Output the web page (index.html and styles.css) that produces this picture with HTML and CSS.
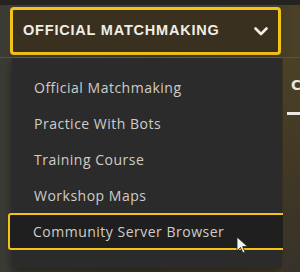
FILE: index.html
```html
<!DOCTYPE html>
<html>
<head>
<meta charset="utf-8">
<link rel="stylesheet" href="styles.css">
</head>
<body>
<div class="scene">
  <div class="side-right">
    <span class="side-letter">C</span>
    <span class="side-bar"></span>
  </div>
  <div class="dropdown">
    <button class="select">
      <span class="select-label">OFFICIAL MATCHMAKING</span>
      <svg class="chevron" width="14" height="9" viewBox="0 0 14 9"><polyline points="1.5,1.5 7,7 12.5,1.5" fill="none" stroke="#f2efe6" stroke-width="2.6" stroke-linecap="round" stroke-linejoin="round"/></svg>
    </button>
    <ul class="menu">
      <li class="item">Official Matchmaking</li>
      <li class="item">Practice With Bots</li>
      <li class="item">Training Course</li>
      <li class="item">Workshop Maps</li>
      <li class="item active">Community Server Browser</li>
    </ul>
  </div>
  <svg class="cursor" width="14" height="20" viewBox="0 0 14 20"><path d="M1 1 L1 15 L4.5 11.5 L7 17 L9 16 L6.6 10.6 L11.5 10.6 Z" fill="#f4f4f4" stroke="#222" stroke-width="0.8"/></svg>
</div>
</body>
</html>
```

FILE: styles.css
```css
* { box-sizing: border-box; }
html, body { margin: 0; padding: 0; }
body {
  width: 300px;
  height: 272px;
  overflow: hidden;
  background:
    linear-gradient(180deg, #24231f 0px, #24231f 5px, transparent 5px),
    linear-gradient(180deg, transparent 57px, #55534d 57px, #55534d 58px, transparent 58px),
    linear-gradient(90deg, #3b3b36 0px, #3d3b33 12px, #3f3a2a 150px, #473e26 283px, #4c4128 300px);
  font-family: "Open Sans", "DejaVu Sans", sans-serif;
}
.scene {
  position: relative;
  width: 300px;
  height: 272px;
  padding: 7px 0 0 10px;
}
.side-right {
  position: absolute;
  left: 283px;
  top: 58px;
  width: 17px;
  height: 214px;
  background: linear-gradient(180deg, #4b4127 0%, #3f3725 60%, #37322a 100%);
}
.side-letter {
  position: absolute;
  left: 8px;
  top: 19px;
  color: #e8e6df;
  font: 700 14px "DejaVu Sans", sans-serif;
}
.side-bar {
  position: absolute;
  left: 4px;
  top: 54px;
  width: 13px;
  height: 3px;
  background: #e9e7e0;
}
.dropdown {
  width: 272px;
  display: flex;
  flex-direction: column;
}
.select {
  width: 271px;
  height: 48px;
  border: 3px solid #f3c21b;
  border-radius: 4px;
  background: #3a3020;
  display: flex;
  align-items: center;
  justify-content: space-between;
  padding: 0 10px 2px 10px;
  font: inherit;
  cursor: pointer;
}
.select-label {
  color: #efede6;
  font: 700 14.5px "Liberation Sans", Arial, sans-serif;
  letter-spacing: 0.8px;
}
.chevron { display: block; margin-top: 2px; }
.menu {
  list-style: none;
  margin: 2px 0 0 2px;
  padding: 11px 0 19px 0;
  width: 270px;
  height: 211px;
  background: #2c2b2b;
  border-top: 1px solid #5a5853;
  box-shadow: 0 4px 10px rgba(0,0,0,0.45);
}
.item {
  height: 36px;
  display: flex;
  align-items: center;
  padding-left: 22px;
  color: #cfcdc8;
  font-size: 14px;
  letter-spacing: 0.5px;
}
.item.active {
  margin: 0 -5px 0 -4px;
  padding-left: 23px;
  height: 37px;
  border: 2.5px solid #f3c21b;
  border-radius: 3px;
  background: #201f1f;
}
.cursor {
  position: absolute;
  left: 236px;
  top: 236px;
}
```
